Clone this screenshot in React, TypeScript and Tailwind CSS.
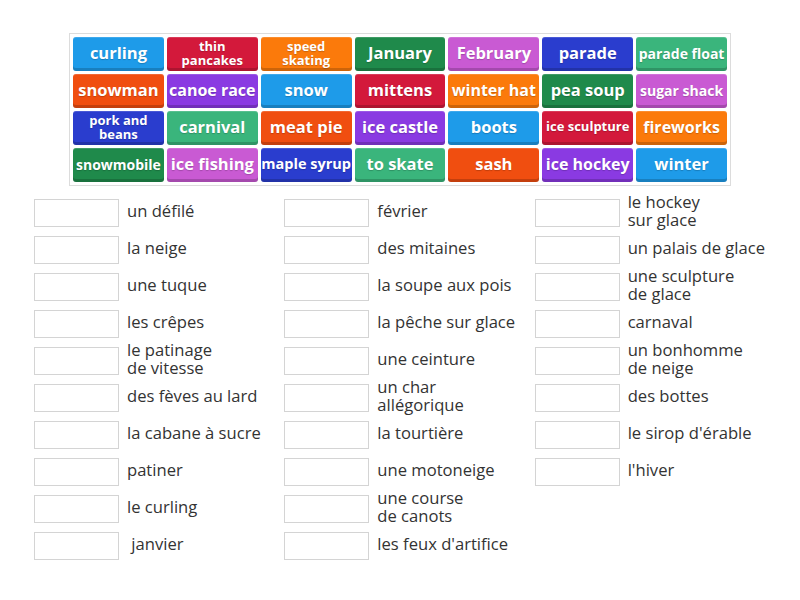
const C = {
  blue: "bg-[#1e9be9]",
  red: "bg-[#d3193b]",
  orange: "bg-[#fb7a0b]",
  dkgreen: "bg-[#1f8a4b]",
  pink: "bg-[#c95ad3]",
  dkblue: "bg-[#2a3dce]",
  teal: "bg-[#3ab57c]",
  orangered: "bg-[#f04e10]",
  purple: "bg-[#8a3ae2]",
};

type Tile = { label: string; color: string; size: string; wrap?: boolean };

const tiles: Tile[] = [
  { label: "curling", color: C.blue, size: "text-[16.5px]" },
  { label: "thin pancakes", color: C.red, size: "text-[13px] leading-[14px] px-3", wrap: true },
  { label: "speed skating", color: C.orange, size: "text-[13px] leading-[14px] px-4", wrap: true },
  { label: "January", color: C.dkgreen, size: "text-[16.5px]" },
  { label: "February", color: C.pink, size: "text-[16.5px]" },
  { label: "parade", color: C.dkblue, size: "text-[16.5px]" },
  { label: "parade float", color: C.teal, size: "text-[14px]" },

  { label: "snowman", color: C.orangered, size: "text-[16.5px]" },
  { label: "canoe race", color: C.purple, size: "text-[16px]" },
  { label: "snow", color: C.blue, size: "text-[16.5px]" },
  { label: "mittens", color: C.red, size: "text-[16.5px]" },
  { label: "winter hat", color: C.orange, size: "text-[16px]" },
  { label: "pea soup", color: C.dkgreen, size: "text-[16.5px]" },
  { label: "sugar shack", color: C.pink, size: "text-[14px]" },

  { label: "pork and beans", color: C.dkblue, size: "text-[13px] leading-[14px] px-4", wrap: true },
  { label: "carnival", color: C.teal, size: "text-[16.5px]" },
  { label: "meat pie", color: C.orangered, size: "text-[16.5px]" },
  { label: "ice castle", color: C.purple, size: "text-[16.5px]" },
  { label: "boots", color: C.blue, size: "text-[16.5px]" },
  { label: "ice sculpture", color: C.red, size: "text-[13px]" },
  { label: "fireworks", color: C.orange, size: "text-[16px]" },

  { label: "snowmobile", color: C.dkgreen, size: "text-[14px]" },
  { label: "ice fishing", color: C.pink, size: "text-[16.5px]" },
  { label: "maple syrup", color: C.dkblue, size: "text-[14.5px]" },
  { label: "to skate", color: C.teal, size: "text-[16.5px]" },
  { label: "sash", color: C.orangered, size: "text-[16.5px]" },
  { label: "ice hockey", color: C.purple, size: "text-[16px]" },
  { label: "winter", color: C.blue, size: "text-[16.5px]" },
];

const columns: string[][] = [
  [
    "un défilé",
    "la neige",
    "une tuque",
    "les crêpes",
    "le patinage\nde vitesse",
    "des fèves au lard",
    "la cabane à sucre",
    "patiner",
    "le curling",
    " janvier",
  ],
  [
    "février",
    "des mitaines",
    "la soupe aux pois",
    "la pêche sur glace",
    "une ceinture",
    "un char\nallégorique",
    "la tourtière",
    "une motoneige",
    "une course\nde canots",
    "les feux d'artifice",
  ],
  [
    "le hockey\nsur glace",
    "un palais de glace",
    "une sculpture\nde glace",
    "carnaval",
    "un bonhomme\nde neige",
    "des bottes",
    "le sirop d'érable",
    "l'hiver",
  ],
];

function TileButton({ tile }: { tile: Tile }) {
  return (
    <div
      className={`flex h-[34px] items-center justify-center overflow-hidden rounded-[3px] pb-[2px] text-center font-bold text-white shadow-[inset_0_-3px_0_rgba(0,0,0,0.18),inset_0_1px_0_rgba(255,255,255,0.15)] [text-shadow:0_1px_1px_rgba(0,0,0,0.2)] ${tile.color} ${tile.size}`}
    >
      <span className={tile.wrap ? "whitespace-normal" : "whitespace-nowrap"}>{tile.label}</span>
    </div>
  );
}

function Slot({ text }: { text: string }) {
  return (
    <div className="flex h-[28px] items-center gap-[8px]">
      <div className="h-[28px] w-[85px] shrink-0 border border-[#d4d4d4] bg-white" />
      <div className="-mt-[4px] text-[16.6px] leading-[18.5px] whitespace-pre-wrap text-[#333]">{text}</div>
    </div>
  );
}

export default function App() {
  return (
    <div className="h-[600px] w-[800px] bg-white font-['Open_Sans',sans-serif]">
      <div className="pt-[33px]">
        <div className="mx-auto grid w-[662px] grid-cols-7 gap-[3px] border border-[#dcdcdc] p-[3px]">
          {tiles.map((t) => (
            <TileButton key={t.label} tile={t} />
          ))}
        </div>
      </div>
      <div className="mt-[13px] ml-[34px] grid w-[751px] grid-cols-3">
        {columns.map((col, i) => (
          <div key={i} className="flex flex-col gap-[9px]">
            {col.map((t) => (
              <Slot key={t} text={t} />
            ))}
          </div>
        ))}
      </div>
    </div>
  );
}
